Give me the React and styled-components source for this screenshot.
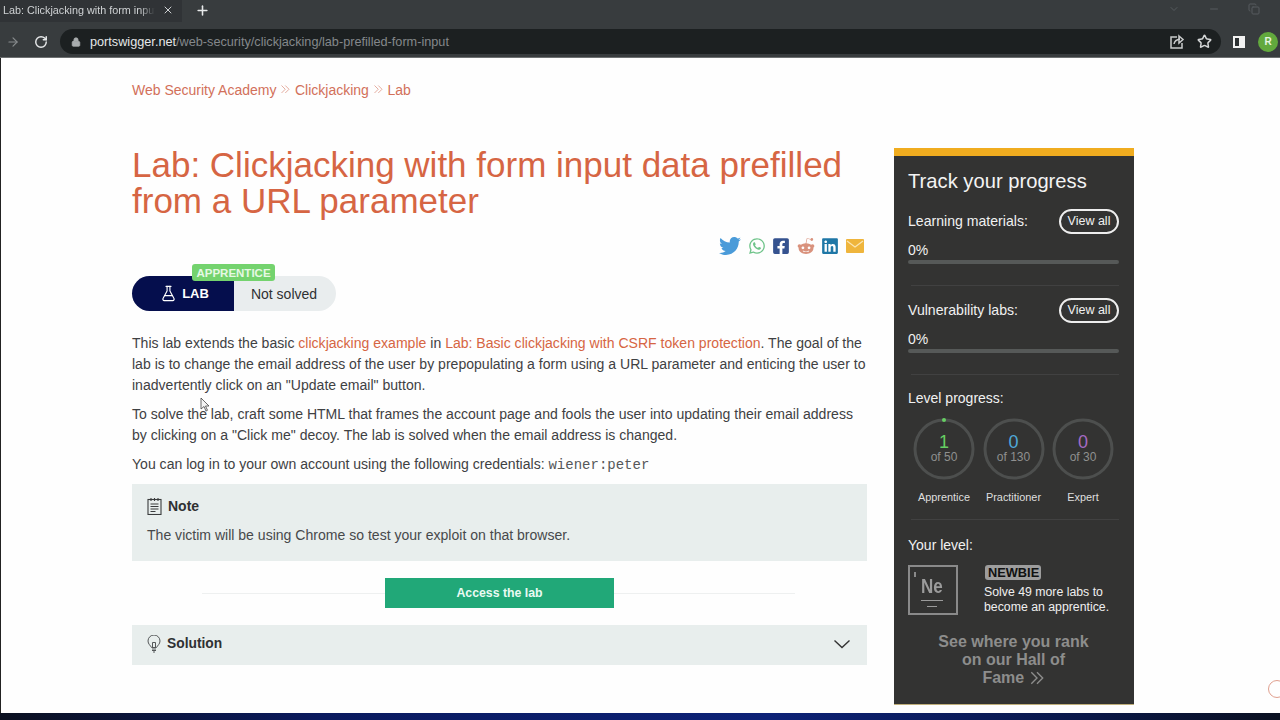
import React from 'react';
import styled, { createGlobalStyle } from 'styled-components';
import { FaTwitter, FaWhatsapp, FaFacebookSquare, FaRedditAlien, FaLinkedin } from 'react-icons/fa';
import { ArrowRight, RotateCw, Lock, X, Plus, Star, FlaskConical, ChevronDown, Minus, Copy } from 'lucide-react';

const Global = createGlobalStyle`
  html, body { margin: 0; padding: 0; height: 100%; overflow: hidden; background: #fff; }
  body { font-family: "Liberation Sans", Arial, sans-serif; color: #3b3d3e; }
  * { box-sizing: border-box; }
`;

const Shell = styled.div`
  width: 1280px; height: 720px; display: flex; flex-direction: column; position: relative; overflow: hidden;
`;
const TabBar = styled.div`
  height: 28px; background: #383c3e; display: flex; align-items: flex-start; flex: none;
`;
const Tab = styled.div`
  width: 182px; height: 22px; background: #303336; display: flex; align-items: center; padding: 0 8px 2px 3px;
  color: #cfd2d4; font-size: 10.8px; justify-content: space-between; white-space: nowrap;
`;
const TabTitle = styled.span`
  width: 152px; overflow: hidden; display: block; line-height: 14px;
  mask-image: linear-gradient(90deg, #000 90%, transparent);
`;
const NewTab = styled.div`
  margin: 3px 0 0 13px; color: #e8eaeb; display: flex;
`;
const WinControls = styled.div`
  margin: 3px 0 0 auto; display: flex; align-items: center; gap: 28px; padding-right: 20px; color: #565b5e;
`;
const Toolbar = styled.div`
  height: 30px; background: #383c3e; display: flex; align-items: center; flex: none; padding: 0 0 2px 6px;
  border-bottom: 1px solid #6d7071;
`;
const NavIcon = styled.div`
  display: flex; width: 16px; margin-right: ${p => p.$gap || 0}px; color: ${p => p.$color || '#e6e8e9'};
`;
const Omnibox = styled.div`
  width: 1161px; height: 25px; margin-left: 10px; border-radius: 13px; background: #1c2021; display: flex; align-items: center;
  padding: 0 9px 0 11px; font-size: 12.7px; color: #84888b; gap: 9px;
`;
const Host = styled.span` color: #e5e7e8; `;
const Url = styled.span` flex: 1; white-space: nowrap; `;
const OmniIcons = styled.div`
  display: flex; align-items: center; gap: 12px; color: #d4d6d7;
`;
const SidePanelIcon = styled.div`
  width: 12px; height: 12px; margin-left: 12px; border: 2px solid #f2f2f2; border-right-width: 6px; background: #2c3032; flex: none;
`;
const Avatar = styled.div`
  width: 20px; height: 20px; border-radius: 50%; background: #62a93d; color: #e8f5e0; margin-left: 13px; flex: none;
  display: flex; align-items: center; justify-content: center; font-size: 10px; font-weight: 700;
`;
const Page = styled.div`
  flex: 1; min-height: 0; background: #fefefe; display: flex; gap: 27px; padding-left: 131px; border-left: 1px solid #222; position: relative;
`;
const Main = styled.div`
  width: 735px; display: flex; flex-direction: column;
`;
const Breadcrumbs = styled.div`
  display: flex; align-items: center; gap: 4px; margin-top: 24px; height: 16px; font-size: 14px; color: #d2705a;
`;
const Title = styled.h1`
  margin: 49px 0 0; font-size: 35px; font-weight: 400; line-height: 36px; color: #d66543;
`;
const ShareRow = styled.div`
  margin-top: 16px; height: 22px; display: flex; justify-content: flex-end; align-items: center; gap: 6.6px; padding-right: 3px;
`;
const SocialSlot = styled.div`
  display: flex; color: ${p => p.$color};
`;
const BadgeWrap = styled.div`
  margin-top: 19px; width: 204px; height: 35px; display: flex; border-radius: 18px; position: relative; font-size: 14px;
`;
const BadgeLab = styled.div`
  width: 102px; background: #050e4d; color: #fff; border-radius: 18px 0 0 18px; display: flex; align-items: center; justify-content: center;
  gap: 5px; font-size: 13px; font-weight: 700; padding-left: 3px;
`;
const BadgeState = styled.div`
  flex: 1; background: #e9edee; border-radius: 0 18px 18px 0; color: #2f3133; display: flex; align-items: center; justify-content: center; padding-right: 2px;
`;
const Level = styled.div`
  position: absolute; left: 60px; top: -12px; height: 17px; width: 83px; background: #74d36e; color: #e6f8e4; border-radius: 3px;
  font-size: 11.5px; font-weight: 700; display: flex; align-items: center; justify-content: center;
`;
const Para = styled.p`
  margin: ${p => p.$top}px 0 0; font-size: 14.06px; line-height: 21px; color: #3f4143;
`;
const A = styled.span` color: #d66543; `;
const Mono = styled.span` font-family: "Liberation Mono", monospace; font-size: 14px; color: #56585a; `;
const Note = styled.div`
  margin-top: 8px; height: 77px; background: #e8eeed; padding: 12px 15px 0; display: flex; flex-direction: column; gap: 9px;
`;
const NoteHead = styled.div`
  display: flex; align-items: center; gap: 6px; font-weight: 700; font-size: 14px; color: #2f3133; height: 20px;
`;
const NoteText = styled.div` font-size: 14.06px; color: #47494b; line-height: 21px; `;
const CtaRow = styled.div`
  margin-top: 17px; height: 30px; display: flex; align-items: center; justify-content: center; position: relative;
`;
const CtaRule = styled.div`
  position: absolute; left: 70px; right: 72px; top: 15px; height: 1px; background: #eef0f0;
`;
const Cta = styled.div`
  width: 229px; height: 30px; background: #21a878; color: #eafaf3; font-size: 12.3px; font-weight: 700; display: flex; align-items: center; justify-content: center; position: relative;
`;
const Solution = styled.div`
  margin-top: 17px; height: 40px; background: #e8eeed; display: flex; align-items: center; padding: 0 16px 3px 15px; font-weight: 700; font-size: 13.8px; color: #2f3133; gap: 6px;
`;
const SolChevron = styled.div`
  margin-left: auto; display: flex; color: #333;
`;
const Side = styled.aside`
  width: 240px; height: 557px; margin-top: 90px; background: #333332; border-top: 8px solid #f0ac1f; color: #f1f1f1; padding: 0 15px 0 14px; display: flex; flex-direction: column; flex: none;
  border-bottom: 1px solid #bfae7a;
`;
const SideTitle = styled.div`
  font-size: 20.2px; margin-top: 13px; line-height: 24px; color: #f4f4f4;
`;
const Row = styled.div`
  display: flex; align-items: center; justify-content: space-between; font-size: 14.1px; height: 26px; margin-top: ${p => p.$top}px;
`;
const ViewAll = styled.div`
  width: 60px; height: 25px; border: 2px solid #eee; border-radius: 13px; font-size: 12.5px; display: flex; align-items: center; justify-content: center; color: #f1f1f1;
`;
const Pct = styled.div`
  font-size: 14px; line-height: 16px; margin-top: 8px;
`;
const Bar = styled.div`
  height: 4px; background: #565958; margin-top: 2px; border-radius: 2px;
`;
const Divider = styled.div`
  height: 1px; background: #414141; margin: ${p => p.$top}px 0 0 3px;
`;
const SectionLabel = styled.div`
  font-size: 14px; line-height: 16px; margin-top: ${p => p.$top}px;
`;
const Rings = styled.div`
  display: flex; justify-content: space-between; margin-top: 12px; padding: 0 5px 0 5px;
`;
const RingCol = styled.div`
  width: 62px; display: flex; flex-direction: column; align-items: center; font-size: 10.9px; color: #dfdfdf;
`;
const RingBox = styled.div`
  width: 62px; height: 62px; position: relative; margin-bottom: 11px;
`;
const RingText = styled.div`
  position: absolute; inset: 0; display: flex; flex-direction: column; align-items: center; justify-content: center; line-height: 15px; font-size: 12px; color: #8f908f; padding-top: 1px;
`;
const RingNum = styled.span`
  font-size: 18px; line-height: 16px; color: ${p => p.$color};
`;
const LevelRow = styled.div`
  display: flex; gap: 26px; margin-top: 12px;
`;
const Element = styled.div`
  width: 50px; height: 50px; border: 2px solid #8a8a8a; display: flex; flex-direction: column; align-items: center; color: #9b9b9b; position: relative; padding: 7px 2px 0 0; flex: none;
`;
const ElSym = styled.div`
  font-size: 20px; font-weight: 700; line-height: 24px; transform: scaleX(.85);
`;
const ElLine = styled.div`
  height: 1px; background: #9b9b9b; width: ${p => p.$w}px; margin-top: ${p => p.$top}px; flex: none;
`;
const ElTick = styled.span`
  position: absolute; left: 4px; top: 5px; width: 2px; height: 5px; background: #8a8a8a;
`;
const LevelInfo = styled.div`
  font-size: 12.3px; line-height: 15px; color: #efefef;
`;
const Newbie = styled.div`
  display: inline-block; background: #9d9d9d; color: #111; font-weight: 700; font-size: 12.8px; border-radius: 3px; padding: 0 2px 0 3px; line-height: 15px; margin: 0 0 5px 1px;
`;
const Rank = styled.div`
  margin-top: 18px; text-align: center; font-size: 16px; line-height: 18px; font-weight: 700; color: #8d8d8c;
`;
const Footer = styled.div`
  height: 7px; flex: none; background: linear-gradient(90deg, #0b1020 0%, #0a1a5e 25%, #0d2277 60%, #0a1848 85%, #0b1020 100%);
`;
const TopCircle = styled.div`
  position: absolute; right: -6px; top: 622px; width: 18px; height: 18px; border-radius: 50%; border: 1px solid #e0a08f;
`;
const Cursor = styled.svg`
  position: absolute; left: 199px; top: 339px;
`;
const ChevronSvg = styled.svg`
  vertical-align: middle; margin-top: -2px;
`;

const Ring = ({ num, of, label, color, dot }) => (
  <RingCol>
    <RingBox>
      <svg width="62" height="62" viewBox="0 0 62 62">
        <circle cx="31" cy="31" r="29" fill="none" stroke="#4d4f4e" strokeWidth="3" />
        {dot && <circle cx="31" cy="2" r="2" fill="#66cf63" />}
      </svg>
      <RingText>
        <RingNum $color={color}>{num}</RingNum>
        <span>of {of}</span>
      </RingText>
    </RingBox>
    {label}
  </RingCol>
);

const Chevrons = ({ c = '#8d8d8c', s = 14, w = 1.3 }) => (
  <ChevronSvg width={s} height={s} viewBox="0 0 14 14" fill="none" stroke={c} strokeWidth={w}><path d="M2 2l5 5-5 5M7 2l5 5-5 5" /></ChevronSvg>
);

const NoteIcon = () => (
  <svg width="15" height="18" viewBox="0 0 15 18" fill="none" stroke="#3a3c3d" strokeWidth="1.1">
    <rect x="1" y="2.5" width="13" height="15" />
    <path d="M4 1v3M7.5 1v3M11 1v3M3.5 7h8M3.5 9.5h8M3.5 12h8M3.5 14.5h5" />
  </svg>
);
const BulbIcon = () => (
  <svg width="14" height="18" viewBox="0 0 14 18" fill="none" stroke="#55585a" strokeWidth="1">
    <path d="M4.5 12.5C3.5 10.500 1 9 1 6a6 6 0 0112 0c0 3-2.500 4.500-3.500 6.500z" />
    <path d="M5.500 12V7.500h3V12M5 14h4M5 15.500h4M6 17h2" />
  </svg>
);
const ShareBox = () => (
  <svg width="16" height="16" viewBox="0 0 16 16" fill="none" stroke="#c9cbcc" strokeWidth="1.5">
    <path d="M8 3H2v11h11V9" />
    <path d="M5 10c.5-3 3-4.500 6-4.500M10 2l4 3.500L10 9z" />
  </svg>
);
const MailIcon = () => (
  <svg width="18" height="14" viewBox="0 0 18 14">
    <rect width="18" height="14" rx="1" fill="#efb53c" />
    <path d="M1 2l8 6 8-6" fill="none" stroke="#fbe6b4" strokeWidth="1.2" />
  </svg>
);

export default function App() {
  return (
    <Shell>
      <Global />
      <TabBar>
        <Tab><TabTitle>Lab: Clickjacking with form input</TabTitle><X size={12} /></Tab>
        <NewTab><Plus size={15} strokeWidth={2.5} /></NewTab>
        <WinControls>
          <ChevronDown size={12} />
          <Minus size={12} />
          <Copy size={12} />
        </WinControls>
      </TabBar>
      <Toolbar>
        <NavIcon $gap={12} $color="#878b8d"><ArrowRight size={14} /></NavIcon>
        <NavIcon><RotateCw size={14} strokeWidth={2.5} /></NavIcon>
        <Omnibox>
          <Lock size={10} fill="#a9adaf" color="#a9adaf" />
          <Url><Host>portswigger.net</Host>/web-security/clickjacking/lab-prefilled-form-input</Url>
          <OmniIcons>
            <ShareBox />
            <Star size={15} strokeWidth={2.4} />
          </OmniIcons>
        </Omnibox>
        <SidePanelIcon />
        <Avatar>R</Avatar>
      </Toolbar>
      <Page>
        <Main>
          <Breadcrumbs>
            Web Security Academy <Chevrons c="#de9c8c" s={10.5} w={1.1} /> Clickjacking <Chevrons c="#de9c8c" s={10.5} w={1.1} /> Lab
          </Breadcrumbs>
          <Title>Lab: Clickjacking with form input data prefilled from a URL parameter</Title>
          <ShareRow>
            <SocialSlot $color="#4a9bd9"><FaTwitter size={22} /></SocialSlot>
            <SocialSlot $color="#6fc48a"><FaWhatsapp size={18} /></SocialSlot>
            <SocialSlot $color="#35528f"><FaFacebookSquare size={18} /></SocialSlot>
            <SocialSlot $color="#d9927d"><FaRedditAlien size={18} /></SocialSlot>
            <SocialSlot $color="#1f77a6"><FaLinkedin size={18} /></SocialSlot>
            <SocialSlot $color="#efb53c"><MailIcon /></SocialSlot>
          </ShareRow>
          <BadgeWrap>
            <BadgeLab><FlaskConical size={17} strokeWidth={1.6} />LAB</BadgeLab>
            <BadgeState>Not solved</BadgeState>
            <Level>APPRENTICE</Level>
          </BadgeWrap>
          <Para $top={22}>
            This lab extends the basic <A>clickjacking example</A> in <A>Lab: Basic clickjacking with CSRF token protection</A>. The goal of the lab is to change the email address of the user by prepopulating a form using a URL parameter and enticing the user to inadvertently click on an "Update email" button.
          </Para>
          <Para $top={8}>
            To solve the lab, craft some HTML that frames the account page and fools the user into updating their email address by clicking on a "Click me" decoy. The lab is solved when the email address is changed.
          </Para>
          <Para $top={8}>
            You can log in to your own account using the following credentials: <Mono>wiener:peter</Mono>
          </Para>
          <Note>
            <NoteHead><NoteIcon />Note</NoteHead>
            <NoteText>The victim will be using Chrome so test your exploit on that browser.</NoteText>
          </Note>
          <CtaRow>
            <CtaRule />
            <Cta>Access the lab</Cta>
          </CtaRow>
          <Solution>
            <BulbIcon />Solution
            <SolChevron>
              <svg width="18" height="10" viewBox="0 0 18 10" fill="none" stroke="#333" strokeWidth="1.4"><path d="M1.500 1.500L9 8.500l7.500-7" /></svg>
            </SolChevron>
          </Solution>
        </Main>
        <Side>
          <SideTitle>Track your progress</SideTitle>
          <Row $top={15}>Learning materials:<ViewAll>View all</ViewAll></Row>
          <Pct>0%</Pct>
          <Bar />
          <Divider $top={21} />
          <Row $top={11}>Vulnerability labs:<ViewAll>View all</ViewAll></Row>
          <Pct>0%</Pct>
          <Bar />
          <Divider $top={21} />
          <SectionLabel $top={15}>Level progress:</SectionLabel>
          <Rings>
            <Ring num="1" of="50" label="Apprentice" color="#66cf63" dot />
            <Ring num="0" of="130" label="Practitioner" color="#4fa8d8" />
            <Ring num="0" of="30" label="Expert" color="#a56bc4" />
          </Rings>
          <Divider $top={16} />
          <SectionLabel $top={17}>Your level:</SectionLabel>
          <LevelRow>
            <Element>
              <ElTick />
              <ElSym>Ne</ElSym>
              <ElLine $w={22} $top={2} />
              <ElLine $w={10} $top={5} />
            </Element>
            <LevelInfo>
              <Newbie>NEWBIE</Newbie>
              <div>Solve 49 more labs to</div>
              <div>become an apprentice.</div>
            </LevelInfo>
          </LevelRow>
          <Rank>See where you rank<br />on our Hall of<br />Fame <Chevrons s={16} w={1.2} /></Rank>
        </Side>
        <TopCircle />
        <Cursor width="10" height="16" viewBox="0 0 10 16"><path d="M1 1v11l3-2.500 2 4.500 1.500-.7-2-4.300H9z" fill="#f4f4f4" stroke="#444" strokeWidth="0.8" /></Cursor>
      </Page>
      <Footer />
    </Shell>
  );
}
